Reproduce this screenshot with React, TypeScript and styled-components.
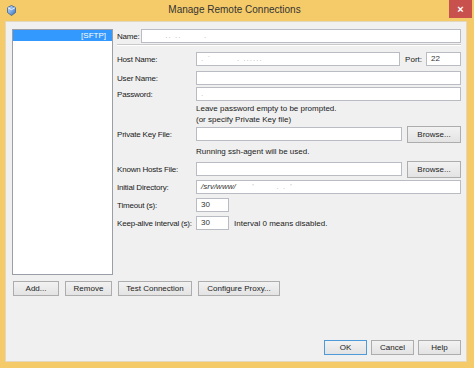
import styled, { createGlobalStyle } from 'styled-components';

const Global = createGlobalStyle`
	html, body {
		margin: 0;
		padding: 0;
		background: #f5cb69;
	}
	* {
		box-sizing: border-box;
	}
`;

const Frame = styled.div`
	width: 474px;
	height: 368px;
	background: #f5cb69;
	display: flex;
	flex-direction: column;
	font-family: "Liberation Sans", Arial, sans-serif;
	font-size: 8px;
	color: #1a1a1a;
`;

const TitleBar = styled.div`
	height: 21px;
	display: flex;
	align-items: flex-start;
`;

const AppIcon = styled.svg`
	margin: 5px 0 0 7px;
`;

const Title = styled.div`
	flex: 1;
	text-align: center;
	font-family: "Liberation Sans", Arial, sans-serif;
	font-size: 10px;
	line-height: 20px;
	color: #333;
	padding-left: 4px;
`;

const CloseBtn = styled.div`
	width: 23px;
	height: 18px;
	margin-right: 2px;
	background: #c8504d;
	color: #fff;
	display: flex;
	align-items: center;
	justify-content: center;
	font-size: 11px;
	font-weight: bold;
`;

const Client = styled.div`
	flex: 1;
	margin: 0 7px 6px 5px;
	background: #f0f0f0;
	border: 1px solid #e3d8bd;
	padding: 7px 5px 0 6px;
	display: flex;
	flex-direction: column;
`;

const Main = styled.div`
	display: flex;
	gap: 4px;
`;

const List = styled.div`
	width: 101px;
	height: 246px;
	background: #fff;
	border: 1px solid #9a9ea6;
	flex-shrink: 0;
`;

const ListItem = styled.div<{ selected?: boolean }>`
	height: 11px;
	line-height: 11px;
	text-align: right;
	padding-right: 6px;
	background: ${({ selected }) => (selected ? '#3399ff' : 'transparent')};
	color: ${({ selected }) => (selected ? '#fff' : '#222')};
`;

const Form = styled.div`
	flex: 1;
	display: flex;
	flex-direction: column;
`;

const Row = styled.div<{ top?: number }>`
	display: flex;
	align-items: center;
	height: 14px;
	margin-top: ${({ top }) => top ?? 4}px;
`;

const Label = styled.div<{ w?: number }>`
	width: ${({ w }) => w ?? 79}px;
	flex-shrink: 0;
	white-space: nowrap;
	letter-spacing: -0.2px;
`;

const Input = styled.div<{ w?: number; italic?: boolean }>`
	height: 14px;
	background: #fff;
	border: 1px solid #b9bcc2;
	padding: 0 4px;
	line-height: 12px;
	white-space: nowrap;
	overflow: hidden;
	color: #333;
	font-style: ${({ italic }) => (italic ? 'italic' : 'normal')};
	${({ w }) => (w ? `width: ${w}px; flex-shrink: 0;` : 'flex: 1;')}
`;

const Separator = styled.div`
	height: 1px;
	background: #c9c9c9;
	border-bottom: 1px solid #fff;
	margin-top: 1px;
	box-sizing: content-box;
`;

const Note = styled.div<{ top?: number }>`
	margin-left: 79px;
	margin-top: ${({ top }) => top ?? 0}px;
	line-height: 11px;
	white-space: nowrap;
`;

const Side = styled.span`
	margin: 0 4px 0 5px;
	white-space: nowrap;
`;

const Button = styled.div<{ w: number; primary?: boolean }>`
	width: ${({ w }) => w}px;
	height: 15px;
	flex-shrink: 0;
	display: flex;
	align-items: center;
	justify-content: center;
	border: 1px solid ${({ primary }) => (primary ? '#4f9ad8' : '#adadad')};
	background: linear-gradient(#f2f2f2, #e3e3e3);
	white-space: nowrap;
	color: #222;
`;

const BrowseButton = styled(Button)`
	height: 17px;
	margin-left: 5px;
`;

const ButtonRow = styled.div`
	display: flex;
	gap: 6px;
	margin-top: 6px;
	padding-left: 1px;
`;

const Footer = styled.div`
	margin-top: auto;
	margin-bottom: 6px;
	display: flex;
	justify-content: flex-end;
	gap: 4px;
`;

const Blur = styled.span`
	color: #b8b8b8;
	letter-spacing: 1px;
`;

export default function App() {
	return (
		<Frame>
			<Global />
			<TitleBar>
				<AppIcon width="9" height="11" viewBox="0 0 9 11">
					<defs>
						<linearGradient id="g" x1="0" y1="0" x2="1" y2="1">
							<stop offset="0" stopColor="#cfe6ff" />
							<stop offset="1" stopColor="#2f6fc4" />
						</linearGradient>
					</defs>
					<path d="M4.5 0.5 L8.5 2.5 L8.5 7.5 L4.5 10.5 L0.5 7.5 L0.5 2.5 Z" fill="url(#g)" stroke="#3d5f8f" strokeWidth="0.8" />
					<path d="M0.8 2.7 L4.5 4.6 L8.2 2.7" fill="none" stroke="#fff" strokeWidth="0.8" />
				</AppIcon>
				<Title>Manage Remote Connections</Title>
				<CloseBtn>×</CloseBtn>
			</TitleBar>
			<Client>
				<Main>
					<List>
						<ListItem selected>[SFTP]</ListItem>
					</List>
					<Form>
						<Row top={0}>
							<Label w={24}>Name:</Label>
							<Input>
								<Blur>&nbsp;&nbsp;&nbsp;&nbsp;&nbsp;&nbsp;.. ..&nbsp;&nbsp;&nbsp;&nbsp;&nbsp;&nbsp;&nbsp;.</Blur>
							</Input>
						</Row>
						<Separator />
						<Row top={6}>
							<Label>Host Name:</Label>
							<Input>
								<Blur>. `&nbsp;&nbsp;&nbsp;&nbsp;&nbsp;&nbsp;&nbsp;&nbsp;. ......</Blur>
							</Input>
							<Side>Port:</Side>
							<Input w={35}>22</Input>
						</Row>
						<Row top={5}>
							<Label>User Name:</Label>
							<Input />
						</Row>
						<Row top={2}>
							<Label>Password:</Label>
							<Input>
								<Blur>.</Blur>
							</Input>
						</Row>
						<Note top={2}>
							Leave password empty to be prompted.
							<br />
							(or specify Private Key file)
						</Note>
						<Row top={2}>
							<Label>Private Key File:</Label>
							<Input />
							<BrowseButton w={54}>Browse...</BrowseButton>
						</Row>
						<Note top={5}>Running ssh-agent will be used.</Note>
						<Row top={5}>
							<Label>Known Hosts File:</Label>
							<Input />
							<BrowseButton w={54}>Browse...</BrowseButton>
						</Row>
						<Row top={4}>
							<Label>Initial Directory:</Label>
							<Input italic>
								/srv/www/<Blur>&nbsp;&nbsp;&nbsp;&nbsp;&nbsp;'&nbsp;&nbsp;&nbsp;&nbsp;&nbsp;&nbsp;&nbsp;. . '</Blur>
							</Input>
						</Row>
						<Row top={4}>
							<Label>Timeout (s):</Label>
							<Input w={33}>30</Input>
						</Row>
						<Row top={4}>
							<Label>Keep-alive interval (s):</Label>
							<Input w={33}>30</Input>
							<Side>Interval 0 means disabled.</Side>
						</Row>
					</Form>
				</Main>
				<ButtonRow>
					<Button w={46}>Add...</Button>
					<Button w={47}>Remove</Button>
					<Button w={74}>Test Connection</Button>
					<Button w={82}>Configure Proxy...</Button>
				</ButtonRow>
				<Footer>
					<Button w={43} primary>OK</Button>
					<Button w={43}>Cancel</Button>
					<Button w={43}>Help</Button>
				</Footer>
			</Client>
		</Frame>
	);
}
